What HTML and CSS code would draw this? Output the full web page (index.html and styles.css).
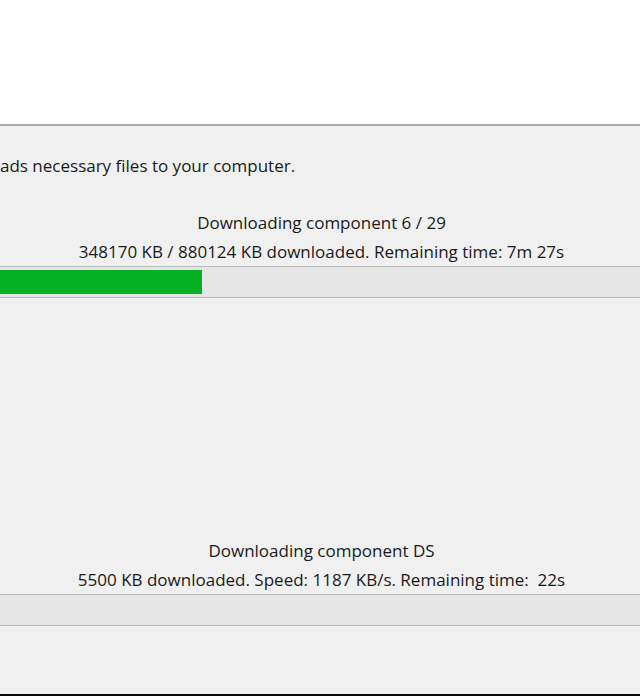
FILE: index.html
```html
<!DOCTYPE html>
<html lang="en">
<head>
<meta charset="utf-8">
<title>Downloading components</title>
<link rel="stylesheet" href="styles.css">
</head>
<body>
<div class="window">
  <div class="header"></div>
  <div class="panel">
    <p class="intro">ads necessary files to your computer.</p>
    <div class="status status-first">
      <p class="line">Downloading component 6 / 29</p>
      <p class="line">348170 KB / 880124 KB downloaded. Remaining time: 7m 27s</p>
    </div>
    <div class="bar"><div class="fill" style="width: 202px"></div></div>
    <div class="status status-second">
      <p class="line">Downloading component DS</p>
      <p class="line">5500 KB downloaded. Speed: 1187 KB/s. Remaining time:&nbsp; 22s</p>
    </div>
    <div class="bar"><div class="fill" style="width: 0px"></div></div>
  </div>
  <div class="bottom"></div>
</div>
</body>
</html>
```
FILE: styles.css
```css
html, body {
  margin: 0;
  padding: 0;
  background: #ffffff;
}
.window {
  width: 640px;
  height: 696px;
  overflow: hidden;
  display: flex;
  flex-direction: column;
  font-family: "Open Sans", "Noto Sans", "DejaVu Sans", sans-serif;
  font-size: 17px;
  color: #1a1a1a;
}
.header {
  height: 124px;
  background: #ffffff;
  border-bottom: 2px solid #a9a9a9;
  flex: none;
}
.panel {
  flex: 1;
  background: #f0f0f0;
  display: flex;
  flex-direction: column;
  padding-top: 25px;
}
.intro {
  margin: 0;
  line-height: 29px;
  white-space: nowrap;
}
.status {
  display: flex;
  flex-direction: column;
  align-items: center;
  padding-left: 3px;
}
.status-first {
  margin-top: 28px;
}
.status-second {
  margin-top: 238px;
}
.line {
  margin: 0;
  line-height: 29px;
  white-space: nowrap;
}
.bar {
  height: 24px;
  padding: 3px 0;
  background: #e6e6e6;
  border-top: 1px solid #bcbcbc;
  border-bottom: 1px solid #bcbcbc;
  flex: none;
}
.fill {
  height: 24px;
  background: #06b025;
}
.bottom {
  height: 2px;
  background: #0a0a0a;
  flex: none;
}
```
